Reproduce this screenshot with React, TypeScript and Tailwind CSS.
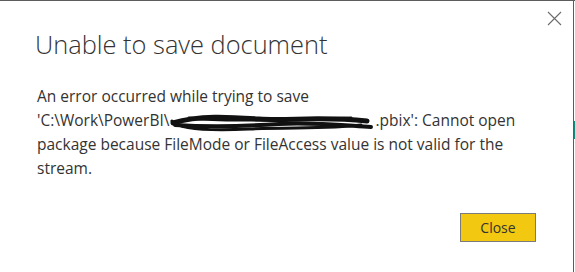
export default function App() {
  return (
    <div className="flex h-[272px] w-[575px] bg-white" style={{ fontFamily: '"Open Sans", "Liberation Sans", sans-serif' }}>
      <div className="relative flex h-full w-[574px] flex-col border-t border-r border-[#5c5c5c] bg-white">
        <button className="absolute right-[11px] top-[9px] flex h-[16px] w-[16px] items-center justify-center text-[#6b6b6b]">
          <svg width="15" height="15" viewBox="0 0 15 15" fill="none" stroke="currentColor" strokeWidth="1.1">
            <path d="M1 1 L14 14 M14 1 L1 14" />
          </svg>
        </button>
        <h1 className="ml-[35px] mt-[25px] text-[25.4px] font-light leading-[36px] text-[#333333]">
          Unable to save document
        </h1>
        <p className="ml-[37px] mt-[22px] text-[15.5px] leading-[24px] text-[#333333]">
          An error occurred while trying to save
          <br />
          'C:\Work\PowerBI\
          <span className="inline-block h-[16px] w-[206px] align-[-3px]">
            <svg width="206" height="20" viewBox="0 0 206 20" fill="none" stroke="#111" strokeLinecap="round">
              <path d="M4 10 C30 2 60 4 90 6 C120 8 150 3 198 8" strokeWidth="5" />
              <path d="M6 12 C40 14 80 13 110 11 C140 9 170 12 202 14" strokeWidth="4" />
              <path d="M3 8 C10 16 40 18 80 16 C120 14 160 16 192 12" strokeWidth="3" />
              <path d="M20 5 C60 9 120 6 182 5" strokeWidth="3" />
            </svg>
          </span>
          .pbix': Cannot open
          <br />
          package because FileMode or FileAccess value is not valid for the
          <br />
          stream.
        </p>
        <div className="mt-auto mb-[30px] mr-[37px] flex justify-end">
          <button className="h-[29px] w-[76px] border border-[#7a7a7a] bg-[#f2c811] text-[14px] text-[#333333]">
            Close
          </button>
        </div>
      </div>
      <div className="flex w-[1px] flex-col border-t border-[#5c5c5c]">
        <div className="h-[120px]" />
        <div className="h-[18px] bg-[#118a7e]" />
      </div>
    </div>
  )
}
